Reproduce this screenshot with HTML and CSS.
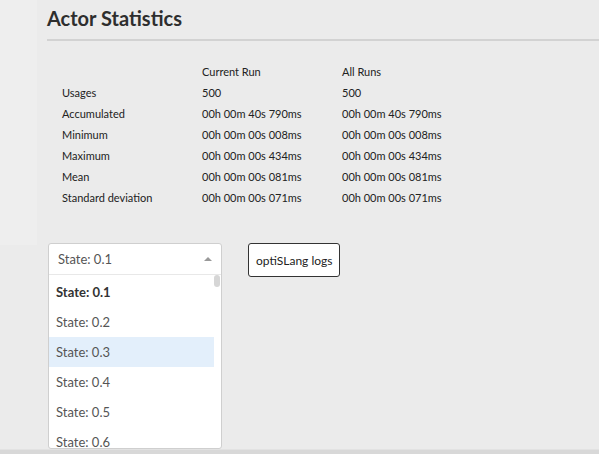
FILE: index.html
```html
<!DOCTYPE html>
<html>
<head>
<meta charset="utf-8">
<link rel="stylesheet" href="styles.css">
</head>
<body>
<div class="page">
  <div class="workspace">
    <div class="sidebar"></div>
    <main class="main">
      <h1 class="title">Actor Statistics</h1>
      <table class="stats">
        <tr><td></td><td>Current Run</td><td>All Runs</td></tr>
        <tr><td>Usages</td><td>500</td><td>500</td></tr>
        <tr><td>Accumulated</td><td>00h 00m 40s 790ms</td><td>00h 00m 40s 790ms</td></tr>
        <tr><td>Minimum</td><td>00h 00m 00s 008ms</td><td>00h 00m 00s 008ms</td></tr>
        <tr><td>Maximum</td><td>00h 00m 00s 434ms</td><td>00h 00m 00s 434ms</td></tr>
        <tr><td>Mean</td><td>00h 00m 00s 081ms</td><td>00h 00m 00s 081ms</td></tr>
        <tr><td>Standard deviation</td><td>00h 00m 00s 071ms</td><td>00h 00m 00s 071ms</td></tr>
      </table>
      <div class="controls">
        <div class="select">
          <div class="select-head">
            <span>State: 0.1</span>
            <span class="caret"></span>
          </div>
          <div class="select-body">
            <ul class="options">
              <li class="opt selected">State: 0.1</li>
              <li class="opt">State: 0.2</li>
              <li class="opt hover">State: 0.3</li>
              <li class="opt">State: 0.4</li>
              <li class="opt">State: 0.5</li>
              <li class="opt">State: 0.6</li>
            </ul>
            <div class="scrollbar"><div class="thumb"></div></div>
          </div>
        </div>
        <button class="logs">optiSLang logs</button>
      </div>
    </main>
  </div>
  <div class="hscroll"></div>
</div>
</body>
</html>
```

FILE: styles.css
```css
* { box-sizing: border-box; }
html, body { margin: 0; padding: 0; }
body {
  background: #ebebeb;
  font-family: "Open Sans", "Noto Sans", sans-serif;
  color: #333;
}
.page {
  height: 454px;
  display: flex;
  flex-direction: column;
  overflow: hidden;
}
.workspace {
  flex: 1;
  display: flex;
  min-height: 0;
}
.sidebar {
  width: 37px;
  height: 245px;
  background: #eeeeee;
  flex: none;
}
.main {
  flex: 1;
  padding-left: 10px;
  min-width: 0;
}
.title {
  margin: 0;
  padding-top: 5px;
  height: 41px;
  font-family: "Lato", sans-serif;
  font-weight: 700;
  font-size: 20px;
  line-height: 26px;
  color: #2e2e2e;
  border-bottom: 2px solid #d2d2d2;
}
.stats {
  border-collapse: collapse;
  margin: 20px 0 0 15px;
  font-family: "Lato", sans-serif;
  font-size: 11px;
  color: #222;
}
.stats td {
  height: 21px;
  line-height: 21px;
  padding: 0;
  width: 140px;
  vertical-align: middle;
}
.controls {
  display: flex;
  align-items: flex-start;
  gap: 26px;
  margin: 35px 0 0 1px;
}
.select {
  width: 174px;
  background: #fff;
  border: 1px solid #cfcfcf;
  border-radius: 3px;
  font-family: "Lato", sans-serif;
  font-size: 13px;
  color: #555;
}
.select-head {
  height: 31px;
  display: flex;
  align-items: center;
  justify-content: space-between;
  padding: 0 9px 0 9px;
  border-bottom: 1px solid #e8e8e8;
}
.caret {
  width: 0;
  height: 0;
  border-left: 4px solid transparent;
  border-right: 4px solid transparent;
  border-bottom: 4px solid #999;
}
.select-body {
  display: flex;
  height: 173px;
  overflow: hidden;
}
.options {
  list-style: none;
  margin: 0;
  padding: 2px 0 0 0;
  flex: 1;
}
.opt {
  height: 30px;
  line-height: 30px;
  padding-left: 7px;
}
.opt.selected { font-weight: 700; color: #333; }
.opt.hover { background: #e3effb; }
.scrollbar {
  width: 7px;
  flex: none;
}
.thumb {
  width: 6px;
  height: 12px;
  background: #d6d6d6;
  border-radius: 3px;
}
.logs {
  margin: 0;
  height: 34px;
  padding: 0 7px;
  background: #fff;
  border: 1px solid #333;
  border-radius: 3px;
  font-family: "Lato", sans-serif;
  font-size: 12px;
  color: #222;
}
.hscroll {
  height: 5px;
  flex: none;
  background: #d8d8d8;
  border-top: 1px solid #e2e2e2;
}
```
